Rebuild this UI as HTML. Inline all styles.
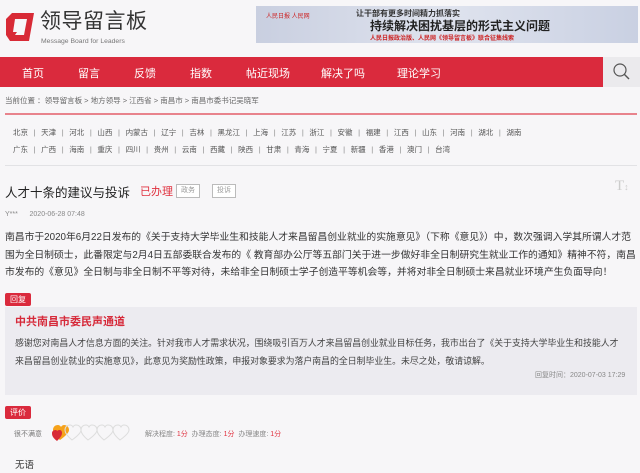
<!DOCTYPE html>
<html><head><meta charset="utf-8"><style>
*{margin:0;padding:0;box-sizing:border-box}
body{width:640px;height:473px;overflow:hidden;background:#f7f6f8;font-family:"Liberation Sans","Noto Sans CJK SC",sans-serif;color:#333;position:relative}
.a{position:absolute;white-space:nowrap}
.nav{position:absolute;left:0;top:57px;width:603px;height:30px;background:#da2a3d}
.nav span{position:absolute;top:8px;color:#fff;font-size:11px}
.srch{position:absolute;left:603px;top:57px;width:37px;height:30px;background:#ebeaed}
.prov{position:absolute;font-size:7.5px;color:#555;white-space:nowrap}
.prov i{font-style:normal;color:#888;margin:0 5.6px}
.lbl{position:absolute;background:#da2a3d;color:#fff;font-size:8px;padding:0 5px;height:13px;line-height:13px;border-radius:2px}
.tag{position:absolute;border:1px solid #bbb;color:#999;font-size:7px;height:14px;line-height:12px;padding:0 4px;background:#fff}
p.t{position:absolute;font-size:10px;line-height:17.5px;color:#333}
</style></head><body>
<svg class="a" style="left:6px;top:13px" width="28" height="28" viewBox="0 0 28 28"><path d="M6 0H28L23 28H4L0 22V6Z M9 6L7 19H11L9 22H18L21 6Z" fill="#d82a36" fill-rule="evenodd"/></svg>
<div class="a" style="left:40px;top:9px;font-size:21px;line-height:26px;color:#333;letter-spacing:0.5px">领导留言板</div>
<div class="a" style="left:41px;top:38px;font-size:6.8px;color:#777">Message Board for Leaders</div>
<div class="a" style="left:256px;top:6px;width:382px;height:37px;background:linear-gradient(90deg,#c9cfe0,#dfe3ee 50%,#c9d0e2)"></div>
<div class="a" style="left:266px;top:11px;font-size:6px;color:#c22">人民日报 人民网</div>
<div class="a" style="left:356px;top:8px;font-size:8px;color:#333;font-weight:bold">让干部有更多时间精力抓落实</div>
<div class="a" style="left:370px;top:17px;font-size:12px;color:#222;font-weight:bold">持续解决困扰基层的形式主义问题</div>
<div class="a" style="left:370px;top:33px;font-size:6px;color:#c22;font-weight:bold">人民日报政治版、人民网《领导留言板》联合征集线索</div>
<div class="nav"><span style="left:22px">首页</span><span style="left:78px">留言</span><span style="left:134px">反馈</span><span style="left:190px">指数</span><span style="left:246px">帖近现场</span><span style="left:321px">解决了吗</span><span style="left:397px">理论学习</span></div>
<div class="srch"><svg width="37" height="30"><circle cx="17" cy="13" r="6" fill="none" stroke="#555" stroke-width="1.2"/><line x1="21" y1="17" x2="26" y2="22" stroke="#555" stroke-width="1.4"/></svg></div>
<div class="a" style="left:5px;top:95px;font-size:7.5px;color:#666">当前位置 ：领导留言板 &gt; 地方领导 &gt; 江西省 &gt; 南昌市 &gt; 南昌市委书记吴晓军</div>
<div class="a" style="left:5px;top:113px;width:632px;height:2px;background:#e8838c"></div>
<div class="prov" style="left:13px;top:127px">北京<i>|</i>天津<i>|</i>河北<i>|</i>山西<i>|</i>内蒙古<i>|</i>辽宁<i>|</i>吉林<i>|</i>黑龙江<i>|</i>上海<i>|</i>江苏<i>|</i>浙江<i>|</i>安徽<i>|</i>福建<i>|</i>江西<i>|</i>山东<i>|</i>河南<i>|</i>湖北<i>|</i>湖南</div>
<div class="prov" style="left:13px;top:144px">广东<i>|</i>广西<i>|</i>海南<i>|</i>重庆<i>|</i>四川<i>|</i>贵州<i>|</i>云南<i>|</i>西藏<i>|</i>陕西<i>|</i>甘肃<i>|</i>青海<i>|</i>宁夏<i>|</i>新疆<i>|</i>香港<i>|</i>澳门<i>|</i>台湾</div>
<div class="a" style="left:5px;top:165px;width:632px;height:1px;background:#e2e2e5"></div>
<div class="a" style="left:5px;top:182px;font-size:12.5px;color:#222">人才十条的建议与投诉</div>
<div class="a" style="left:140px;top:183px;font-size:11px;color:#e0313f">已办理</div>
<div class="tag" style="left:176px;top:184px">政务</div>
<div class="tag" style="left:212px;top:184px">投诉</div>
<div class="a" style="left:615px;top:178px;font-size:15px;color:#ccc;font-family:'Liberation Serif',serif">T<span style="font-size:9px">↕</span></div>
<div class="a" style="left:5px;top:211px;font-size:7px;color:#888">Y***&nbsp;&nbsp;&nbsp;&nbsp;&nbsp;&nbsp;2020-06-28 07:48</div>
<p class="t" style="left:5px;top:229px;width:632px;font-size:9.8px">南昌市于2020年6月22日发布的《关于支持大学毕业生和技能人才来昌留昌创业就业的实施意见》（下称《意见》）中，数次强调入学其所谓人才范围为全日制硕士，此番限定与2月4日五部委联合发布的《 教育部办公厅等五部门关于进一步做好非全日制研究生就业工作的通知》精神不符，南昌市发布的《意见》全日制与非全日制不平等对待，未给非全日制硕士学子创造平等机会等，并将对非全日制硕士来昌就业环境产生负面导向！</p>
<div class="lbl" style="left:5px;top:293px">回复</div>
<div class="a" style="left:5px;top:307px;width:632px;height:88px;background:#ecebf0"></div>
<div class="a" style="left:15px;top:313px;font-size:11px;color:#d62a3a;font-weight:bold">中共南昌市委民声通道</div>
<p class="t" style="left:15px;top:334px;width:612px;font-size:8.9px;line-height:18px;color:#444">感谢您对南昌人才信息方面的关注。针对我市人才需求状况，围绕吸引百万人才来昌留昌创业就业目标任务，我市出台了《关于支持大学毕业生和技能人才来昌留昌创业就业的实施意见》，此意见为奖励性政策，申报对象要求为落户南昌的全日制毕业生。未尽之处，敬请谅解。</p>
<div class="a" style="left:535px;top:370px;font-size:7px;color:#888">回复时间：2020-07-03 17:29</div>
<div class="lbl" style="left:5px;top:406px">评价</div>
<div class="a" style="left:14px;top:429px;font-size:7px;color:#777">很不满意</div>
<svg class="a" style="left:52px;top:424px" width="84" height="18" viewBox="0 0 84 18"><path d="M8 16C2 11 1 8 1 6 1 3 3 1 6 1 8 1 9 3 9 3 9 3 10 1 12 1 15 1 17 3 17 6 17 8 15 11 8 16Z" fill="#f6a21a"/><path d="M5 17C0 13 0 11 0 9 0 7 2 6 3.5 6 5 6 5 7 5 7 5 7 6 6 7.5 6 9 6 10 7 10 9 10 11 9 13 5 17Z" fill="#d82a36"/><g fill="none" stroke="#ddd"><path d="M24 16C18 11 17 8 17 6 17 3 19 1 22 1 24 1 25 3 25 3 25 3 26 1 28 1 31 1 33 3 33 6 33 8 31 11 24 16Z" transform="translate(-4,0)"/><path d="M24 16C18 11 17 8 17 6 17 3 19 1 22 1 24 1 25 3 25 3 25 3 26 1 28 1 31 1 33 3 33 6 33 8 31 11 24 16Z" transform="translate(12,0)"/><path d="M24 16C18 11 17 8 17 6 17 3 19 1 22 1 24 1 25 3 25 3 25 3 26 1 28 1 31 1 33 3 33 6 33 8 31 11 24 16Z" transform="translate(28,0)"/><path d="M24 16C18 11 17 8 17 6 17 3 19 1 22 1 24 1 25 3 25 3 25 3 26 1 28 1 31 1 33 3 33 6 33 8 31 11 24 16Z" transform="translate(44,0)"/></g></svg>
<div class="a" style="left:145px;top:429px;font-size:7px;color:#888">解决程度: <span style="color:#e0313f">1分</span>&nbsp; 办理态度: <span style="color:#e0313f">1分</span>&nbsp; 办理速度: <span style="color:#e0313f">1分</span></div>
<div class="a" style="left:15px;top:457px;font-size:9.5px;color:#333">无语</div>
</body></html>
